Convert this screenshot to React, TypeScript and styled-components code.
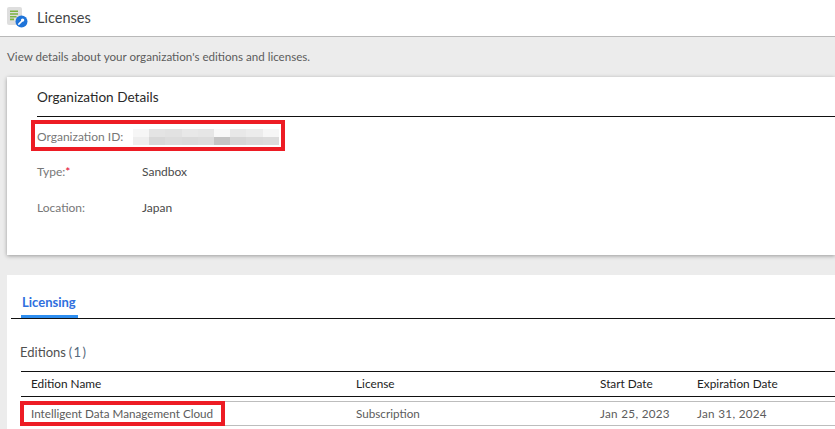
import React from "react";
import styled, { createGlobalStyle } from "styled-components";

const GlobalStyle = createGlobalStyle`
  html, body {
    margin: 0;
    padding: 0;
    overflow: hidden;
  }
  body {
    font-family: "Lato", "Noto Sans", sans-serif;
    background: #ececec;
  }
`;

const Page = styled.div`
  position: relative;
  width: 835px;
  height: 429px;
  overflow: hidden;
  background: #ececec;
`;

const Header = styled.header`
  box-sizing: border-box;
  height: 37px;
  display: flex;
  align-items: center;
  gap: 9px;
  padding: 0 0 2px 6px;
  background: #fff;
  border-bottom: 1px solid #b9b9b9;
`;

const PageTitle = styled.h1`
  margin: 0;
  font-size: 14.5px;
  font-weight: 400;
  color: #444;
`;

const Intro = styled.p`
  margin: 0;
  height: 40px;
  box-sizing: border-box;
  padding: 12px 0 0 7px;
  font-size: 11.6px;
  line-height: 16px;
  color: #5c5c5c;
`;

const DetailsCard = styled.section`
  box-sizing: border-box;
  height: 178px;
  margin-left: 7px;
  padding: 9px 0 0 30px;
  background: #fff;
  box-shadow: 0 1px 4px rgba(0, 0, 0, 0.35);
`;

const CardTitle = styled.h2`
  margin: 0;
  height: 31px;
  box-sizing: border-box;
  padding-top: 2px;
  font-size: 13.6px;
  line-height: 18px;
  font-weight: 400;
  color: #2a2a2a;
  border-bottom: 1px solid #111;
`;

const Field = styled.div<{ $height: number }>`
  display: grid;
  grid-template-columns: 105px 1fr;
  align-items: center;
  height: ${(p) => p.$height}px;
  font-size: 12px;
`;

const FieldLabel = styled.span`
  color: #777;
`;

const FieldValue = styled.span`
  color: #4a4a4a;
`;

const Required = styled.span`
  color: #e4002b;
`;

const MaskedValue = styled.div`
  display: grid;
  grid-template-columns: repeat(9, 16.2px);
  grid-auto-rows: 8px;
  margin-left: -9px;
  width: 146px;
`;

const MaskTile = styled.span<{ $shade: string }>`
  background: ${(p) => p.$shade};
`;

const LicensingCard = styled.section`
  box-sizing: border-box;
  height: 154px;
  margin: 20px 0 0 7px;
  padding: 10px 0 0 4px;
  background: #fff;
`;

const TabBar = styled.nav`
  display: flex;
  height: 34px;
  box-sizing: border-box;
  padding-left: 10px;
  border-bottom: 1px solid #111;
`;

const Tab = styled.a`
  box-sizing: border-box;
  width: 57px;
  padding: 9px 0 0 1px;
  font-size: 13px;
  line-height: 16px;
  font-weight: 700;
  color: #2f6fde;
  border-bottom: 3px solid #2e8ef0;
`;

const SectionTitle = styled.h3`
  margin: 0;
  height: 52px;
  box-sizing: border-box;
  padding: 24px 0 0 9px;
  font-size: 13px;
  line-height: 18px;
  font-weight: 400;
  color: #505050;
  word-spacing: -0.5px;

  span {
    word-spacing: -2px;
    color: #56687c;
  }
`;

const Table = styled.div`
  margin-left: 10px;
`;

const Row = styled.div`
  display: grid;
  grid-template-columns: 325px 244px 97px 1fr;
  align-items: center;
  box-sizing: border-box;
  padding-left: 10px;
`;

const HeadRow = styled(Row)`
  height: 26px;
  padding-bottom: 1px;
  font-size: 11.8px;
  color: #222;
  border-top: 1px solid #111;
  border-bottom: 1px solid #111;
`;

const BodyRow = styled(Row)`
  height: 25px;
  margin-top: 4px;
  padding-bottom: 2px;
  font-size: 11.7px;
  color: #5c5c5c;
  border-top: 1px solid #bdbdbd;
  border-bottom: 1px solid #bdbdbd;
`;

const DateCell = styled.span`
  letter-spacing: 0.3px;
`;

const Highlight = styled.div<{ $left: number; $top: number; $width: number; $height: number }>`
  position: absolute;
  box-sizing: border-box;
  left: ${(p) => p.$left}px;
  top: ${(p) => p.$top}px;
  width: ${(p) => p.$width}px;
  height: ${(p) => p.$height}px;
  border: 4px solid #ed1c24;
  pointer-events: none;
`;

const maskShades = [
  "#f6f6f6", "#e4e4e4", "#e2e2e2", "#e8e8e8", "#e6e6e6", "#f8f8f8", "#e8e8e8", "#ececec", "#f6f6f6",
  "#eeeeee", "#d8d8d8", "#dcdcdc", "#dadada", "#dcdcdc", "#c4c4c4", "#d6d6d6", "#dadada", "#dcdcdc",
];

function LicenseIcon() {
  return (
    <svg width="22" height="22" viewBox="0 0 22 22">
      <rect x="1" y="1" width="15" height="18" rx="2" fill="#dedede" />
      <path d="M4 4.5h8v1.6H4zM4 7.2h8v1.6H4zM4 9.9h6.5v1.6H4zM4 12.6h4v1.6H4z" fill="#7cb342" />
      <circle cx="15.5" cy="15.5" r="6" fill="#1f74d9" />
      <path d="M12.8 18.1l3-3" stroke="#fff" strokeWidth="1.5" strokeLinecap="round" />
      <circle cx="16.6" cy="14.1" r="1.7" fill="#fff" />
    </svg>
  );
}

export default function App() {
  return (
    <>
      <GlobalStyle />
      <Page>
        <Header>
          <LicenseIcon />
          <PageTitle>Licenses</PageTitle>
        </Header>
        <Intro>View details about your organization's editions and licenses.</Intro>
        <DetailsCard>
          <CardTitle>Organization Details</CardTitle>
          <Field $height={39}>
            <FieldLabel>Organization ID:</FieldLabel>
            <MaskedValue>
              {maskShades.map((shade, i) => (
                <MaskTile key={i} $shade={shade} />
              ))}
            </MaskedValue>
          </Field>
          <Field $height={31}>
            <FieldLabel>
              Type:<Required>*</Required>
            </FieldLabel>
            <FieldValue>Sandbox</FieldValue>
          </Field>
          <Field $height={41}>
            <FieldLabel>Location:</FieldLabel>
            <FieldValue>Japan</FieldValue>
          </Field>
        </DetailsCard>
        <LicensingCard>
          <TabBar>
            <Tab>Licensing</Tab>
          </TabBar>
          <SectionTitle>
            Editions <span>( 1 )</span>
          </SectionTitle>
          <Table>
            <HeadRow>
              <span>Edition Name</span>
              <span>License</span>
              <span>Start Date</span>
              <span>Expiration Date</span>
            </HeadRow>
            <BodyRow>
              <span>Intelligent Data Management Cloud</span>
              <span>Subscription</span>
              <DateCell>Jan 25, 2023</DateCell>
              <DateCell>Jan 31, 2024</DateCell>
            </BodyRow>
          </Table>
        </LicensingCard>
        <Highlight $left={31} $top={120} $width={254} $height={31} />
        <Highlight $left={20} $top={401} $width={205} $height={25} />
      </Page>
    </>
  );
}
